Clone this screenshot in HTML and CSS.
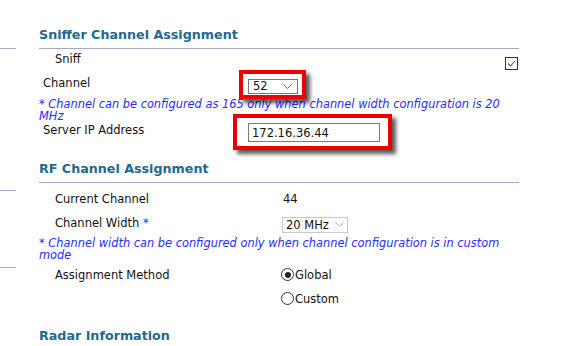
FILE: index.html
```html
<!DOCTYPE html>
<html lang="en">
<head>
  <meta charset="UTF-8">
  <title>Sniffer Channel Assignment</title>
  <link rel="stylesheet" href="styles.css">
</head>
<body>
  <div class="page">
    <!-- left panel, cut off -->
    <div class="side">
      <div class="side-rule rule-a"></div>
      <div class="side-rule rule-b"></div>
      <div class="side-rule rule-c"></div>
    </div>

    <div class="main">
      <h2 class="sec-title sec-first">Sniffer Channel Assignment</h2>

      <div class="row row-sniff">
        <span class="label label-wide">Sniff</span>
        <span class="check">
          <svg width="13" height="13" viewBox="0 0 13 13">
            <rect x="0.5" y="0.5" width="12" height="12" fill="#fff" stroke="#333"/>
            <polyline points="3,6.5 5.5,9 10,4" fill="none" stroke="#555" stroke-width="1.1"/>
          </svg>
        </span>
      </div>

      <div class="row row-channel">
        <span class="label label-short">Channel</span>
        <span class="mark mark-channel">
          <span class="select select-channel">52
            <svg width="9" height="6" viewBox="0 0 9 6"><polyline points="0.5,0.5 4.5,4.5 8.5,0.5" fill="none" stroke="#666"/></svg>
          </span>
        </span>
      </div>

      <p class="note">* Channel can be configured as 165 only when channel width configuration is 20 MHz</p>

      <div class="row row-ip">
        <span class="label label-short">Server IP Address</span>
        <span class="mark mark-ip">
          <input class="ip-input" type="text" value="172.16.36.44">
        </span>
      </div>

      <h2 class="sec-title sec-rf">RF Channel Assignment</h2>

      <div class="row row-current">
        <span class="label label-rf">Current Channel</span>
        <span class="value">44</span>
      </div>

      <div class="row row-width">
        <span class="label label-rf">Channel Width <span class="req">*</span></span>
        <span class="select select-width">20 MHz
          <svg width="9" height="6" viewBox="0 0 9 6"><polyline points="0.5,0.5 4.5,4.5 8.5,0.5" fill="none" stroke="#bbb"/></svg>
        </span>
      </div>

      <p class="note note-width">* Channel width can be configured only when channel configuration is in custom mode</p>

      <div class="row row-method">
        <span class="label label-rf">Assignment Method</span>
        <div class="radios">
          <label class="radio-opt"><span class="radio checked"></span>Global</label>
          <label class="radio-opt"><span class="radio"></span>Custom</label>
        </div>
      </div>

      <h2 class="sec-title sec-radar">Radar Information</h2>
    </div>
  </div>
</body>
</html>
```

FILE: styles.css
```css
  body {
    margin: 0;
    font-family: 'DejaVu Sans', Verdana, sans-serif;
    font-size: 11.5px;
    color: #111;
    background: #fff;
    overflow: hidden;
  }

  .page {
    display: flex;
    gap: 23px;
  }

  /* 左側パネルの区切り線 */
  .side {
    width: 16px;
    flex: none;
  }

  .side-rule {
    border-top: 1px solid #a4a8c4;
  }

  .rule-a { margin-top: 48px; }
  .rule-b { margin-top: 141px; }
  .rule-c { margin-top: 76px; }

  .main {
    width: 480px;
    flex: none;
  }

  .sec-title {
    margin: 0;
    font-size: 12.7px;
    font-weight: bold;
    line-height: 16px;
    color: #22698f;
    padding-bottom: 5px;
    border-bottom: 1px solid #a4a8c4;
  }

  .sec-first { margin-top: 27px; }
  .sec-rf { margin-top: 15px; }
  .sec-radar { margin-top: 12px; }

  .row {
    display: flex;
    align-items: flex-start;
    line-height: 15px;
  }

  .label {
    flex: none;
    box-sizing: border-box;
  }

  .label-wide {
    padding-left: 16px;
    width: 466px;
  }

  .label-short {
    padding-left: 4px;
    width: 209px;
  }

  .label-rf {
    padding-left: 16px;
    width: 243px;
  }

  .req { color: #2b2bff; }

  .row-sniff { height: 21px; }
  .row-sniff .label { padding-top: 3px; }
  .check {
    margin-top: 8px;
    height: 13px;
    display: block;
  }
  .check svg { display: block; }

  .row-channel { height: 27px; }
  .row-channel .label { padding-top: 6px; }

  .row-ip { height: 24px; }
  .row-ip .label { padding-top: 1px; }

  /* 赤枠の注釈 */
  .mark {
    position: relative;
    z-index: 1;
    display: block;
    background: #fff;
    box-shadow: 0 0 0 4px #ee0000, 4px 4px 4px 4px rgba(0, 0, 0, 0.65);
  }

  .mark-channel {
    margin-top: 4px;
    margin-left: -5px;
    padding: 5px 4px 1px 5px;
  }

  .mark-ip {
    margin-top: -4px;
    margin-left: -11px;
    padding: 5px 8px 4px 11px;
  }

  .select {
    display: flex;
    align-items: center;
    justify-content: space-between;
    box-sizing: border-box;
    background: #fff;
  }

  .select svg { display: block; }

  .select-channel {
    width: 50px;
    height: 15px;
    border: 1px solid #767676;
    padding: 0 5px 0 4px;
    line-height: 13px;
  }

  .select-width {
    width: 66px;
    height: 16px;
    border: 1px solid #c8c8c8;
    padding: 0 3px 0 3px;
    line-height: 14px;
    margin-top: 10px;
  }

  .ip-input {
    display: block;
    box-sizing: border-box;
    width: 132px;
    height: 19px;
    margin: 0;
    border: 1px solid #7a7a7a;
    padding: 0 0 0 3px;
    font-family: inherit;
    font-size: 11.5px;
    color: #111;
    outline: none;
  }

  .note {
    margin: 1px 0 0;
    font-size: 11.4px;
    font-style: italic;
    line-height: 12px;
    color: #2b2bff;
  }

  .note-width { margin-top: 4px; }

  .row-current { height: 24px; }
  .row-current .label,
  .row-current .value { padding-top: 9px; }
  .value { padding-left: 1px; }

  .row-width { height: 26px; }
  .row-width .label { padding-top: 9px; }

  .row-method { height: 55px; }
  .row-method .label { padding-top: 7px; }

  .radios {
    padding-top: 7px;
    margin-left: -1px;
  }

  .radio-opt {
    display: flex;
    align-items: flex-start;
    height: 24px;
    gap: 1px;
  }

  .radio {
    box-sizing: border-box;
    width: 13px;
    height: 13px;
    border: 1px solid #333;
    border-radius: 50%;
    background: #fff;
    position: relative;
  }

  .radio.checked::after {
    content: '';
    position: absolute;
    left: 2.5px;
    top: 2.5px;
    width: 6px;
    height: 6px;
    border-radius: 50%;
    background: #222;
  }
```
